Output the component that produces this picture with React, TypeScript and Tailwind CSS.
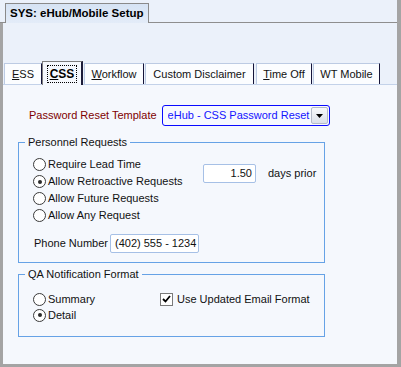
import React from 'react';

// Radio-Kreis im Stil der klassischen Windows-Controls
const Radio: React.FC<{ label: string; checked?: boolean }> = ({ label, checked }) => (
  <div className="flex items-center h-full">
    <span className="w-[13px] h-[13px] rounded-full border border-[#3a3a3a] bg-white flex items-center justify-center shrink-0">
      {checked && <span className="w-[4px] h-[4px] rounded-full bg-[#2a2a2a]"></span>}
    </span>
    <span className="ml-[2px] text-[11px] leading-none text-[#111]">{label}</span>
  </div>
);

const Tab: React.FC<{ w: string; children: React.ReactNode; className?: string }> = ({ w, children, className }) => (
  <div
    className={`${w} ${className ?? ''} h-[21px] flex items-center justify-center bg-[#fbfdff] border-t border-l border-[#bccbe3] border-r border-r-[#15153a] text-[11px] text-[#111]`}
  >
    {children}
  </div>
);

const App: React.FC = () => {
  return (
    <div className="w-[401px] h-[367px] flex flex-col bg-[#ebf1fa] border-r-[4px] border-[#a4a4a4] font-['Liberation_Sans',Arial,sans-serif] overflow-hidden">
      {/* Titel-Reiter */}
      <div className="h-[23px] pt-[3px] pl-[5px] flex border-b border-[#8e8e8e]">
        <div className="h-[20px] -mb-px px-[4px] flex items-center bg-gradient-to-b from-[#d6e3f4] to-[#e3ecf8] border-t border-l border-r border-[#8a8a8a] text-[11.5px] font-bold text-black">
          SYS: eHub/Mobile Setup
        </div>
      </div>

      <div className="flex-1 flex flex-col border-l-[3px] border-b-[3px] border-[#a4a4a4]">
        {/* Reiterleiste */}
        <div className="pt-[38px] flex items-end">
          <Tab w="w-[38px]" className="ml-[1px]">
            <span><span className="underline">E</span>SS</span>
          </Tab>
          <div className="w-[41px] h-[24px] -mb-px flex items-center justify-center bg-[#f5f8fd] border-t border-l border-[#7e7e7e] border-r-2 border-r-[#1c1c38] relative z-10">
            <span className="px-[2px] leading-[16px] outline outline-1 outline-dotted outline-black text-[12px] font-bold text-black">
              <span className="underline">C</span>SS
            </span>
          </div>
          <Tab w="w-[60px]" className="ml-[1px]">
            <span><span className="underline">W</span>orkflow</span>
          </Tab>
          <Tab w="w-[109px]" className="ml-[1px]">
            Custom Disclaimer
          </Tab>
          <Tab w="w-[56px]" className="ml-[2px]">
            <span><span className="underline">T</span>ime Off</span>
          </Tab>
          <Tab w="w-[67px]" className="ml-[1px]">
            WT Mobile
          </Tab>
        </div>

        {/* Inhalt */}
        <div className="flex-1 bg-[#f5f8fd] border-t border-[#c3d2e9]">
          <div className="mt-[20px] pl-[26px] flex items-center">
            <span className="text-[11px] text-[#800000]">Password Reset Template</span>
            <div className="ml-[5px] w-[168px] h-[21px] rounded-[3px] border-[1.5px] border-[#0a0aff] bg-[#f7f9fe] flex items-center pl-[5px] pr-[1px]">
              <span className="flex-1 overflow-hidden whitespace-nowrap text-[11px] text-[#1414ff]">eHub - CSS Password Reset</span>
              <span className="w-[17px] h-[17px] shrink-0 rounded-[2px] border border-[#b4bac8] bg-gradient-to-b from-[#f8f9fb] to-[#dbe0e9] flex items-center justify-center">
                <svg width="7" height="4" viewBox="0 0 7 4">
                  <path d="M0 0 H7 L3.5 4 Z" fill="#000" />
                </svg>
              </span>
            </div>
          </div>

          {/* Personnel Requests */}
          <fieldset className="mt-[10px] ml-[15px] w-[307px] border border-[#66a2e6] pb-[9px]">
            <legend className="ml-[6px] px-[3px] text-[11px] leading-[13px] text-[#111]">Personnel Requests</legend>
            <div className="pt-[7px] flex">
              <div className="w-[184px] pl-[14px] flex flex-col">
                <div className="h-[17px]"><Radio label="Require Lead Time" /></div>
                <div className="h-[17px]"><Radio label="Allow Retroactive Requests" checked /></div>
                <div className="h-[17px]"><Radio label="Allow Future Requests" /></div>
                <div className="h-[17px]"><Radio label="Allow Any Request" /></div>
              </div>
              <div className="mt-[8px] flex items-start">
                <div className="w-[53px] h-[19px] rounded-[2px] border border-[#a6c0e6] bg-white flex items-center justify-end pr-[3px] text-[11px] text-[#111]">
                  1.50
                </div>
                <span className="ml-[12px] h-[19px] flex items-center text-[11px] text-[#111]">days prior</span>
              </div>
            </div>
            <div className="mt-[10px] pl-[15px] flex items-center">
              <span className="w-[76px] text-[11px] text-[#111]">Phone Number</span>
              <div className="w-[89px] h-[19px] rounded-[2px] border border-[#a6c0e6] bg-white flex items-center pl-[4px] text-[11px] text-[#111] whitespace-nowrap overflow-hidden">
                (402) 555 - 1234
              </div>
            </div>
          </fieldset>

          {/* QA Notification Format */}
          <fieldset className="mt-[5px] ml-[15px] w-[307px] border border-[#66a2e6] pb-[13px]">
            <legend className="ml-[6px] px-[3px] text-[11px] leading-[13px] text-[#111]">QA Notification Format</legend>
            <div className="pt-[10px] flex">
              <div className="w-[141px] pl-[14px] flex flex-col">
                <div className="h-[16px]"><Radio label="Summary" /></div>
                <div className="h-[16px]"><Radio label="Detail" checked /></div>
              </div>
              <div className="h-[16px] flex items-center">
                <span className="w-[13px] h-[13px] border border-[#7a7a7a] bg-white flex items-center justify-center">
                  <svg width="9" height="8" viewBox="0 0 9 8">
                    <path d="M1 4 L3.5 6.5 L8 1" fill="none" stroke="#000" strokeWidth="1.8" />
                  </svg>
                </span>
                <span className="ml-[4px] text-[11px] text-[#111]">Use Updated Email Format</span>
              </div>
            </div>
          </fieldset>
        </div>
      </div>
    </div>
  );
};

export default App;
